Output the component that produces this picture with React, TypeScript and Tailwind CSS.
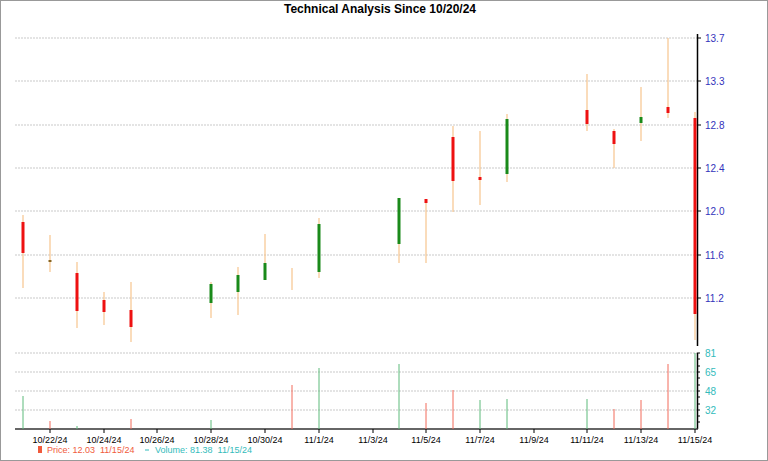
const candles: [number, number, number, number, number, string][] = [
  [23, 215, 288, 222, 253, "r"],
  [50, 235, 272, 260, 262, "d"],
  [77, 262, 328, 273, 311, "r"],
  [104, 292, 325, 300, 312, "r"],
  [131, 282, 342, 310, 327, "r"],
  [211, 282, 318, 284, 303, "g"],
  [238, 267, 315, 275, 292, "g"],
  [265, 234, 280, 263, 280, "g"],
  [292, 268, 290, 289, 290, "n"],
  [319, 218, 278, 224, 272, "g"],
  [399, 198, 263, 198, 244, "g"],
  [426, 199, 263, 199, 203, "r"],
  [453, 126, 212, 137, 181, "r"],
  [480, 131, 205, 177, 180, "r"],
  [507, 114, 182, 119, 174, "g"],
  [587, 74, 131, 110, 124, "r"],
  [614, 129, 168, 131, 144, "r"],
  [641, 87, 141, 117, 123, "g"],
  [668, 38, 118, 107, 113, "r"],
  [695, 112, 340, 118, 314, "r"],
];
const vols: [number, number, string][] = [
  [23, 396, "g"], [50, 421, "r"], [77, 426, "g"], [131, 419, "r"], [211, 420, "g"],
  [292, 385, "r"], [319, 368, "g"], [399, 364, "g"], [426, 403, "r"], [453, 390, "r"],
  [480, 400, "g"], [507, 399, "g"], [587, 399, "g"], [614, 409, "r"], [641, 400, "r"],
  [668, 364, "r"], [695, 353, "g"],
];
const priceTicks: [number, string][] = [[38, "13.7"], [81, "13.3"], [125, "12.8"], [168, "12.4"], [211, "12.0"], [255, "11.6"], [298, "11.2"]];
const volTicks: [number, string][] = [[353, "81"], [372, "65"], [391, "48"], [410, "32"]];
const dates: [number, string][] = [[50, "10/22/24"], [104, "10/24/24"], [157, "10/26/24"], [211, "10/28/24"], [265, "10/30/24"], [319, "11/1/24"], [373, "11/3/24"], [426, "11/5/24"], [480, "11/7/24"], [534, "11/9/24"], [587, "11/11/24"], [641, "11/13/24"], [695, "11/15/24"]];

export default function App() {
  const font = { fontFamily: "'Liberation Sans', Arial, sans-serif" };
  return (
    <div className="w-[768px] h-[461px] bg-white overflow-hidden" style={font}>
      <svg width="768" height="461" className="block">
        <rect x="0.5" y="0.5" width="767" height="460" fill="none" stroke="#999" />
        <text x="380" y="13" textAnchor="middle" fontSize="12" fontWeight="bold" fill="#000">Technical Analysis Since 10/20/24</text>
        {priceTicks.map(([y, l]) => (
          <g key={l}>
            <line x1="15" x2="697" y1={y} y2={y} stroke="#bbb" strokeDasharray="2 1" strokeWidth="0.8" />
            <line x1="697" x2="701" y1={y} y2={y} stroke="#000" />
            <text x="705" y={y + 4} fontSize="10" fill="#3333bb">{l}</text>
          </g>
        ))}
        {volTicks.map(([y, l]) => (
          <g key={l}>
            <line x1="15" x2="697" y1={y} y2={y} stroke="#bbb" strokeDasharray="2 1" strokeWidth="0.8" />
            <text x="705" y={y + 4} fontSize="10" fill="#33bbbb">{l}</text>
          </g>
        ))}
        {[353, 359, 366, 372, 378, 385, 391, 397, 404, 410, 416, 422].map((y) => (
          <line key={y} x1="697" x2="700" y1={y} y2={y} stroke="#000" />
        ))}
        <line x1="697.5" x2="697.5" y1="34" y2="346" stroke="#000" strokeWidth="1.5" />
        <line x1="697.5" x2="697.5" y1="353" y2="429" stroke="#000" strokeWidth="1.5" />
        <line x1="15" x2="698" y1="429" y2="429" stroke="#333" strokeWidth="1.5" />
        {dates.map(([x, l]) => (
          <g key={l}>
            <line x1={x} x2={x} y1="429" y2="433" stroke="#000" />
            <text x={x} y="443" textAnchor="middle" fontSize="9" fill="#000">{l}</text>
          </g>
        ))}
        {vols.map(([x, y, c], i) => (
          <line key={i} x1={x} x2={x} y1={y} y2="429" stroke={c === "g" ? "#5cba7a" : "#f26b5b"} strokeWidth="1" />
        ))}
        {candles.map(([x, wt, wb, bt, bb, c], i) => (
          <g key={i}>
            <line x1={x} x2={x} y1={wt} y2={wb} stroke="#f7c58e" strokeWidth="1.2" />
            {c !== "n" && (
              <rect x={x - 1.5} y={bt} width="3" height={Math.max(bb - bt, 2)} fill={c === "g" ? "#1a8a1a" : c === "r" ? "#ee1111" : "#886622"} />
            )}
          </g>
        ))}
        <rect x="38" y="446" width="4" height="7" fill="#f05a3c" />
        <text x="47" y="453" fontSize="9" fill="#f05a3c" xmlSpace="preserve">Price: 12.03  11/15/24</text>
        <line x1="145" x2="149" y1="450" y2="450" stroke="#33bbbb" />
        <text x="155" y="453" fontSize="9" fill="#33bbbb" xmlSpace="preserve">Volume: 81.38  11/15/24</text>
      </svg>
    </div>
  );
}
